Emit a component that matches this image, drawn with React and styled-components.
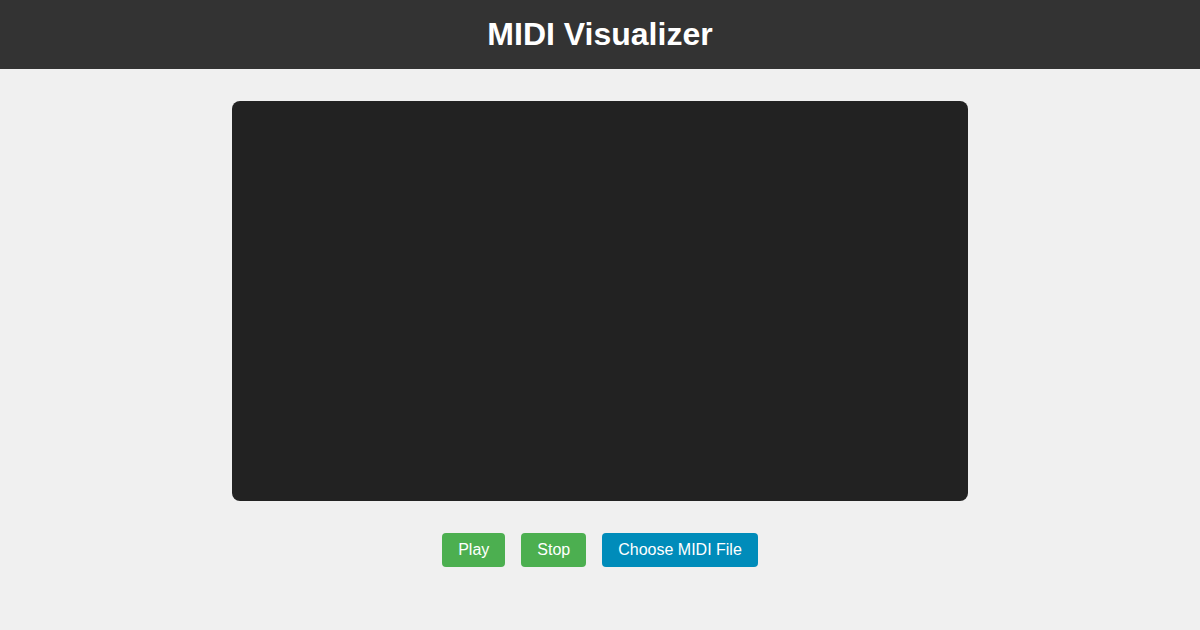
import styled, { createGlobalStyle } from "styled-components";

const GlobalStyle = createGlobalStyle`
    body {
        margin: 0;
        background: #f0f0f0;
        font-family: "Liberation Sans", Arial, sans-serif;
    }
`

const Header = styled.header`
    background: #333333;
    color: #ffffff;
    padding: 16px;
    text-align: center;

    h1 {
        margin: 0;
        font-size: 32px;
        line-height: 37px;
        font-weight: bold;
    }
`

const Main = styled.main`
    display: flex;
    flex-direction: column;
    align-items: center;
    padding: 32px 0;
    gap: 32px;
`

const Canvas = styled.div`
    width: 736px;
    height: 400px;
    background: #222222;
    border-radius: 8px;
`

const Controls = styled.div`
    display: flex;
    gap: 16px;
`

const Button = styled.button`
    background: ${({ $color }) => $color};
    color: #ffffff;
    border: none;
    border-radius: 4px;
    padding: 8px 16px;
    font-family: "Liberation Sans", Arial, sans-serif;
    font-size: 16px;
    line-height: 18px;
    cursor: pointer;
`

const App = () => {
    return (
        <>
            <GlobalStyle />
            <Header>
                <h1>MIDI Visualizer</h1>
            </Header>
            <Main>
                <Canvas />
                <Controls>
                    <Button $color="#4caf50">Play</Button>
                    <Button $color="#4caf50">Stop</Button>
                    <Button $color="#008cba">Choose MIDI File</Button>
                </Controls>
            </Main>
        </>
    )
}

export default App;
